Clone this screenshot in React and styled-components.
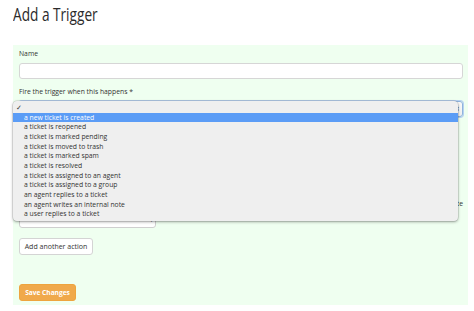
import React from "react";
import styled, { createGlobalStyle } from "styled-components";

const Global = createGlobalStyle`
  html, body { margin: 0; padding: 0; background: #fff; }
  body {
    font-family: "Open Sans", "Noto Sans", sans-serif;
    color: #333;
  }
`;

const Page = styled.div`
  position: relative;
  width: 474px;
  height: 311px;
  overflow: hidden;
  padding: 0 6px 0 13px;
  box-sizing: border-box;
`;

const Title = styled.h1`
  margin: 0;
  padding-top: 3px;
  height: 42px;
  font-size: 17.5px;
  line-height: 22px;
  font-weight: 400;
  color: #2b2b2b;
  span {
    display: inline-block;
    transform: scaleX(0.78);
    transform-origin: left center;
  }
`;

const Panel = styled.form`
  background: #effff0;
  padding: 4px 5px 4px 6px;
  display: flex;
  flex-direction: column;
`;

const Label = styled.label`
  display: block;
  font-size: 6.8px;
  line-height: 10px;
  color: #333;
  margin-bottom: ${(p) => p.$gap || 4}px;
`;

const TextInput = styled.input`
  box-sizing: border-box;
  width: 100%;
  height: 16px;
  border: 1px solid #d6d6d6;
  border-radius: 3px;
  background: #fff;
  margin: 0 0 8px 0;
`;

const SelectBox = styled.div`
  box-sizing: border-box;
  width: ${(p) => p.$width || "100%"};
  height: 16px;
  border: 1px solid ${(p) => (p.$focus ? "#8fb3dd" : "#cfcfcf")};
  box-shadow: ${(p) => (p.$focus ? "0 0 0 1px #b8d2f0" : "none")};
  border-radius: 3px;
  background: ${(p) => (p.$focus ? "linear-gradient(#fafafa, #f0f0f0)" : "#fff")};
  display: flex;
  justify-content: flex-end;
  align-items: center;
  padding-right: 2px;
  font-size: 6px;
  color: #444;
`;

const Hidden = styled.div`
  height: 95px;
  display: flex;
  flex-direction: column;
  justify-content: flex-end;
`;

const NoteRow = styled.div`
  display: flex;
  justify-content: flex-end;
  font-size: 6.8px;
  line-height: 10px;
  color: #333;
  margin-bottom: 3px;
`;

const Button = styled.button`
  align-self: flex-start;
  font-family: inherit;
  font-size: ${(p) => (p.$primary ? 6.6 : 7)}px;
  height: 17px;
  width: ${(p) => p.$w}px;
  padding: 0;
  border-radius: 3px;
  border: 1px solid ${(p) => (p.$primary ? "#eea43e" : "#d4d4d4")};
  background: ${(p) => (p.$primary ? "#f0a94b" : "#fff")};
  color: ${(p) => (p.$primary ? "#fff" : "#333")};
  font-weight: ${(p) => (p.$primary ? 700 : 400)};
  margin-top: ${(p) => p.$top || 0}px;
`;

const Menu = styled.ul`
  position: absolute;
  left: 13px;
  top: 101px;
  width: 445px;
  margin: 0;
  padding: 2px 0;
  list-style: none;
  background: #efefef;
  border-radius: 4px;
  box-shadow: 0 1px 3px rgba(0, 0, 0, 0.35), 0 0 0 0.5px rgba(0, 0, 0, 0.15);
  font-size: 6.8px;
`;

const Item = styled.li`
  height: 9.67px;
  line-height: 9.67px;
  padding-left: ${(p) => (p.$check ? 3 : 11)}px;
  background: ${(p) => (p.$active ? "#5b9cf6" : "transparent")};
  color: ${(p) => (p.$active ? "#fff" : "#333")};
  white-space: nowrap;
`;

const options = [
  "a new ticket is created",
  "a ticket is reopened",
  "a ticket is marked pending",
  "a ticket is moved to trash",
  "a ticket is marked spam",
  "a ticket is resolved",
  "a ticket is assigned to an agent",
  "a ticket is assigned to a group",
  "an agent replies to a ticket",
  "an agent writes an internal note",
  "a user replies to a ticket",
];

export default function App() {
  return (
    <Page>
      <Global />
      <Title>
        <span>Add a Trigger</span>
      </Title>
      <Panel>
        <Label>Name</Label>
        <TextInput />
        <Label $gap={4}>Fire the trigger when this happens *</Label>
        <SelectBox $focus>⇕</SelectBox>
        <Hidden>
          <NoteRow>Add an internal note</NoteRow>
        </Hidden>
        <SelectBox $width="137px">▾</SelectBox>
        <Button $w={74} $top={10}>Add another action</Button>
        <Button $w={57} $primary $top={29}>Save Changes</Button>
      </Panel>
      <Menu>
        <Item $check>✓</Item>
        {options.map((o, i) => (
          <Item key={o} $active={i === 0}>
            {o}
          </Item>
        ))}
      </Menu>
    </Page>
  );
}
